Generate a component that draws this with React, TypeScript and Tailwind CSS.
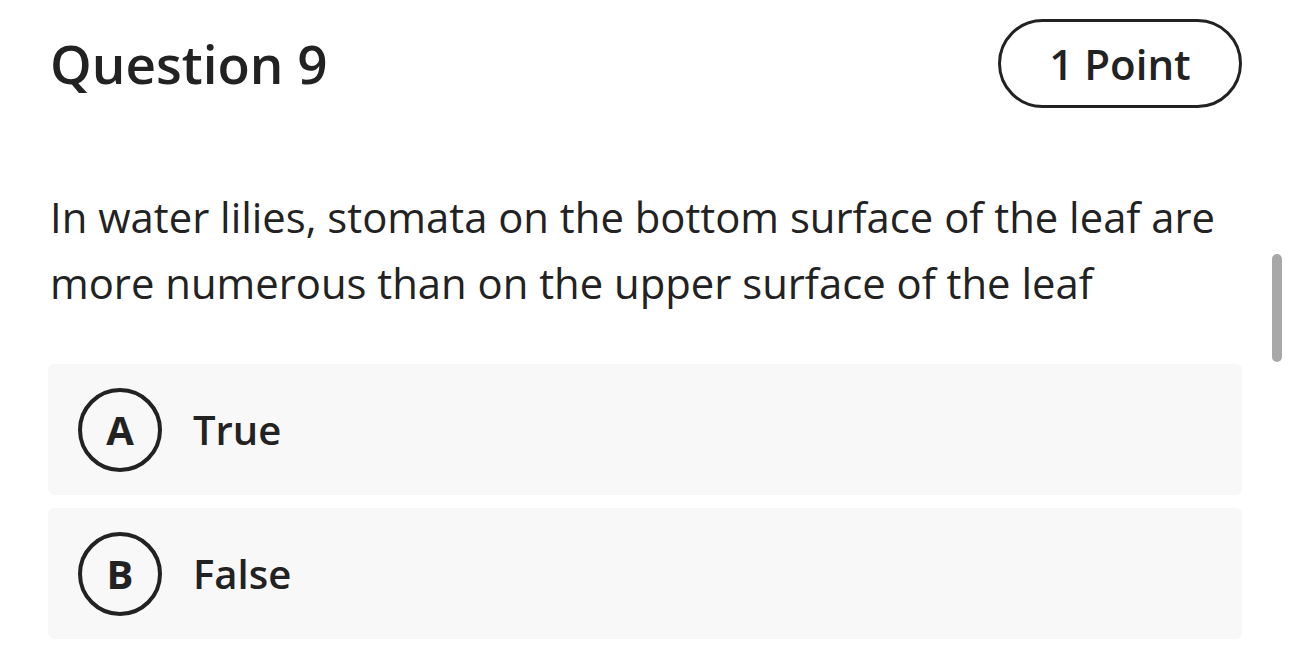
import React from "react";

const OPTIONS = [
  { letter: "A", label: "True" },
  { letter: "B", label: "False" },
];

export default function App() {
  return (
    <div
      className="relative h-[645px] w-[1290px] overflow-hidden bg-white text-[#222222]"
      style={{ fontFamily: '"Open Sans", sans-serif' }}
    >
      <div className="px-[48px]">
        <div className="flex items-center justify-between pt-[19px]">
          <h1 className="pl-[2px] text-[53px] font-semibold leading-[89px]">Question 9</h1>
          <div className="flex h-[89px] w-[244px] items-center justify-center rounded-full border-[3px] border-[#222222] text-[42px] font-semibold">
            1 Point
          </div>
        </div>
        <p className="mt-[76px] pl-[2px] text-[41.8px] leading-[66px]">
          In water lilies, stomata on the bottom surface of the leaf are more numerous than on the upper surface of the leaf
        </p>
        <div className="mt-[48px] flex flex-col gap-[13px]">
          {OPTIONS.map((o) => (
            <div key={o.letter} className="flex h-[131px] items-center gap-[31px] rounded-[6px] bg-[#f8f8f8] pl-[30px]">
              <div className="flex h-[84px] w-[84px] items-center justify-center rounded-full border-[4px] border-[#222222] text-[40px] font-bold">
                {o.letter}
              </div>
              <span className="text-[40px] font-semibold">{o.label}</span>
            </div>
          ))}
        </div>
      </div>
      <div className="absolute left-[1272px] top-[254px] h-[108px] w-[10px] rounded-full bg-[#a8a8a8]" />
    </div>
  );
}
